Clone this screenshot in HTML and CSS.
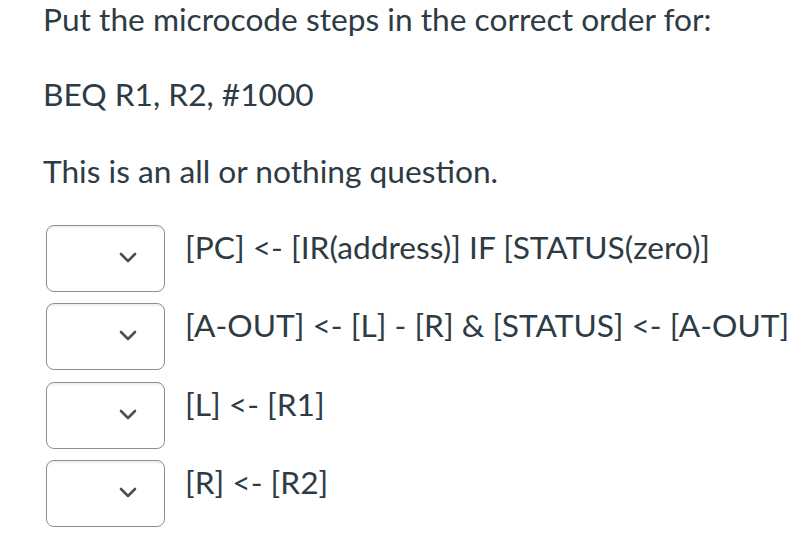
FILE: index.html
```html
<!DOCTYPE html>
<html lang="en">
<head>
  <meta charset="UTF-8">
  <title>Microcode ordering question</title>
  <link rel="stylesheet" href="styles.css">
</head>
<body>
  <div class="question">
    <p>Put the microcode steps in the correct order for:</p>
    <p>BEQ R1, R2, #1000</p>
    <p>This is an all or nothing question.</p>
  </div>

  <ul class="steps">
    <li class="step">
      <div class="pick">
        <svg class="chev" viewBox="0 0 18 11"><path d="M2 2l7 7 7-7"/></svg>
      </div>
      <span class="label">[PC] &lt;- [IR(address)] IF [STATUS(zero)]</span>
    </li>
    <li class="step">
      <div class="pick">
        <svg class="chev" viewBox="0 0 18 11"><path d="M2 2l7 7 7-7"/></svg>
      </div>
      <span class="label">[A-OUT] &lt;- [L] - [R] &amp; [STATUS] &lt;- [A-OUT]</span>
    </li>
    <li class="step">
      <div class="pick">
        <svg class="chev" viewBox="0 0 18 11"><path d="M2 2l7 7 7-7"/></svg>
      </div>
      <span class="label">[L] &lt;- [R1]</span>
    </li>
    <li class="step">
      <div class="pick">
        <svg class="chev" viewBox="0 0 18 11"><path d="M2 2l7 7 7-7"/></svg>
      </div>
      <span class="label">[R] &lt;- [R2]</span>
    </li>
  </ul>
</body>
</html>
```

FILE: styles.css
```css
* {
  margin: 0;
  padding: 0;
}

body {
  background: #fff;
  color: #2d3b45;
  font: 31.7px/34px Lato, "Noto Sans", sans-serif;
}

.question {
  padding: 2px 0 0 43px;
}

.question p {
  margin-bottom: 43px;
}

.question p:first-child {
  margin-bottom: 41px;
}

.question p:last-child {
  margin-bottom: 0;
}

.steps {
  list-style: none;
  padding-left: 46px;
  margin-top: 37px;
  display: flex;
  flex-direction: column;
  gap: 11.3px;
}

.step {
  display: flex;
  align-items: flex-start;
  gap: 20px;
}

.pick {
  position: relative;
  flex: none;
  width: 119px;
  height: 67px;
  box-sizing: border-box;
  border: 1px solid #8b8f94;
  border-radius: 8px;
  background: #fff;
  box-shadow: inset 0 3px 2px -1px #eef0f2;
}

.chev {
  position: absolute;
  left: 72px;
  top: 26px;
  width: 18px;
  height: 11px;
  fill: none;
  stroke: #4a4f54;
  stroke-width: 2.6;
  stroke-linecap: round;
  stroke-linejoin: round;
}

.label {
  padding-top: 5px;
  white-space: nowrap;
}
```
